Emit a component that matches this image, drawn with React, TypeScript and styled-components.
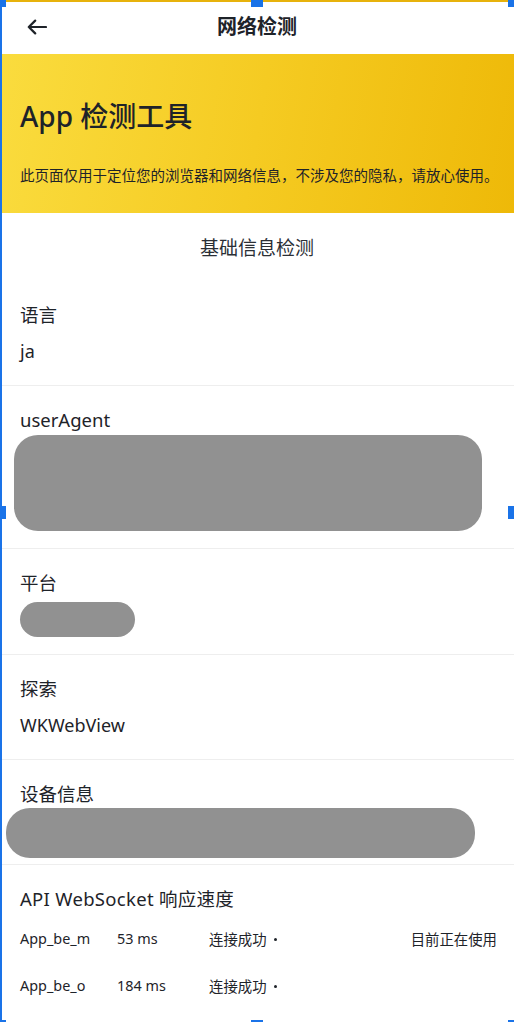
import React from 'react';
import styled, { createGlobalStyle } from 'styled-components';

const GlobalStyle = createGlobalStyle`
  body {
    margin: 0;
    background: #fff;
    font-family: 'Noto Sans', 'Noto Sans CJK SC', sans-serif;
    color: #1e2329;
  }
  * {
    box-sizing: border-box;
  }
`;

interface InfoItem {
  label: string;
  value?: string;
  redact?: { width: number; height: number; top: number; bottom: number; shift: number };
}

const infoItems: InfoItem[] = [
  { label: '语言', value: 'ja' },
  { label: 'userAgent', redact: { width: 468, height: 96, top: 3, bottom: 17, shift: -6 } },
  { label: '平台', redact: { width: 115, height: 35, top: 7, bottom: 17, shift: 0 } },
  { label: '探索', value: 'WKWebView' },
  { label: '设备信息', redact: { width: 469, height: 50, top: 2, bottom: 6, shift: -14 } },
];

const speedRows = [
  { name: 'App_be_m', ms: '53 ms', status: '连接成功', note: '目前正在使用' },
  { name: 'App_be_o', ms: '184 ms', status: '连接成功', note: '' },
];

const BackArrow = () => (
  <svg width="20" height="16" viewBox="0 0 20 16" fill="none">
    <path
      d="M19 8H1.8M8.2 1.6L1.8 8l6.4 6.4"
      stroke="#1e2329"
      strokeWidth="2.2"
      strokeLinecap="round"
      strokeLinejoin="round"
    />
  </svg>
);

export default function App() {
  return (
    <>
      <GlobalStyle />
      <Page>
        <Header>
          <BackButton>
            <BackArrow />
          </BackButton>
          <HeaderTitle>网络检测</HeaderTitle>
          <span />
        </Header>

        <Banner>
          <BannerTitle>App 检测工具</BannerTitle>
          <BannerText>此页面仅用于定位您的浏览器和网络信息，不涉及您的隐私，请放心使用。</BannerText>
        </Banner>

        <SectionHeading>基础信息检测</SectionHeading>

        {infoItems.map((item) => (
          <InfoSection key={item.label}>
            <Label>{item.label}</Label>
            {item.value && <Value>{item.value}</Value>}
            {item.redact && (
              <Redacted
                $width={item.redact.width}
                $height={item.redact.height}
                $top={item.redact.top}
                $bottom={item.redact.bottom}
                $shift={item.redact.shift}
              />
            )}
          </InfoSection>
        ))}

        <SpeedSection>
          <Label $wide>API WebSocket 响应速度</Label>
          <SpeedList>
            {speedRows.map((row) => (
              <SpeedRow key={row.name}>
                <span>{row.name}</span>
                <span>{row.ms}</span>
                <Status>
                  {row.status}
                  <Dot />
                </Status>
                <Note>{row.note}</Note>
              </SpeedRow>
            ))}
          </SpeedList>
        </SpeedSection>
      </Page>

      <SelectionFrame>
        <Handle $x="left" $y="top" />
        <Handle $x="center" $y="top" />
        <Handle $x="right" $y="top" />
        <Handle $x="left" $y="middle" />
        <Handle $x="right" $y="middle" />
        <Handle $x="left" $y="bottom" />
        <Handle $x="center" $y="bottom" />
        <Handle $x="right" $y="bottom" />
      </SelectionFrame>
    </>
  );
}

const Page = styled.div`
  min-height: 1022px;
  background: #fff;
`;

const Header = styled.header`
  height: 54px;
  display: grid;
  grid-template-columns: 1fr auto 1fr;
  align-items: center;
  background: #fff;
`;

const BackButton = styled.button`
  justify-self: start;
  display: flex;
  align-items: center;
  margin-left: 27px;
  padding: 0;
  border: 0;
  background: none;
  cursor: pointer;
`;

const HeaderTitle = styled.h1`
  margin: 0;
  font-size: 20px;
  line-height: 28px;
  font-weight: 700;
`;

const Banner = styled.section`
  height: 159px;
  padding: 44px 20px 0;
  background: linear-gradient(100deg, #fadc3e 0%, #f5cb22 50%, #eeb908 100%);
`;

const BannerTitle = styled.h2`
  margin: 0;
  font-size: 28px;
  line-height: 36px;
  font-weight: 500;
`;

const BannerText = styled.p`
  margin: 31px 0 0;
  font-size: 14.5px;
  line-height: 20px;
  white-space: nowrap;
`;

const SectionHeading = styled.h3`
  margin: 0;
  height: 68px;
  display: flex;
  align-items: center;
  justify-content: center;
  font-size: 19px;
  font-weight: 400;
  color: #2b2f36;
`;

const InfoSection = styled.section`
  display: flex;
  flex-direction: column;
  align-items: flex-start;
  padding: 22px 20px 0;
  border-bottom: 1px solid #eeeeee;
`;

const Label = styled.div<{ $wide?: boolean }>`
  font-size: 18.5px;
  line-height: 24px;
  letter-spacing: ${({ $wide }) => ($wide ? '0.3px' : '0')};
`;

const Value = styled.div`
  margin: 12px 0 22px;
  font-size: 18px;
  line-height: 24px;
`;

interface RedactedProps {
  $width: number;
  $height: number;
  $top: number;
  $bottom: number;
  $shift: number;
}

const Redacted = styled.div<RedactedProps>`
  width: ${({ $width }) => $width}px;
  height: ${({ $height }) => $height}px;
  margin: ${({ $top, $bottom, $shift }) => `${$top}px 0 ${$bottom}px ${$shift}px`};
  border-radius: ${({ $height }) => Math.min($height / 2, 24)}px;
  background: #919191;
`;

const SpeedSection = styled.section`
  padding: 22px 20px 0;
`;

const SpeedList = styled.div`
  margin-top: 4px;
`;

const SpeedRow = styled.div`
  height: 47px;
  display: grid;
  grid-template-columns: 97px 92px 1fr auto;
  align-items: center;
  font-size: 14.4px;
`;

const Status = styled.span`
  display: flex;
  align-items: center;
  gap: 7px;
`;

const Dot = styled.i`
  width: 3px;
  height: 3px;
  border-radius: 50%;
  background: #1e2329;
  margin-top: 2px;
`;

const Note = styled.span`
  margin-right: -3px;
`;

const SelectionFrame = styled.div`
  position: fixed;
  inset: 0;
  pointer-events: none;
  border-top: 2px solid #e7b20c;
  box-shadow: inset 2px 0 0 #1a73e8;
`;

interface HandleProps {
  $x: 'left' | 'center' | 'right';
  $y: 'top' | 'middle' | 'bottom';
}

const Handle = styled.span<HandleProps>`
  position: absolute;
  width: ${({ $x }) => ($x === 'center' ? 12 : 6)}px;
  height: ${({ $y }) => ($y === 'middle' ? 13 : 7)}px;
  background: #1a73e8;
  left: ${({ $x }) => ($x === 'left' ? '0' : $x === 'center' ? 'calc(50% - 6px)' : 'auto')};
  right: ${({ $x }) => ($x === 'right' ? '0' : 'auto')};
  top: ${({ $y }) => ($y === 'top' ? '-2px' : $y === 'middle' ? 'calc(50% - 6px)' : 'auto')};
  bottom: ${({ $y }) => ($y === 'bottom' ? '-5px' : 'auto')};
`;
